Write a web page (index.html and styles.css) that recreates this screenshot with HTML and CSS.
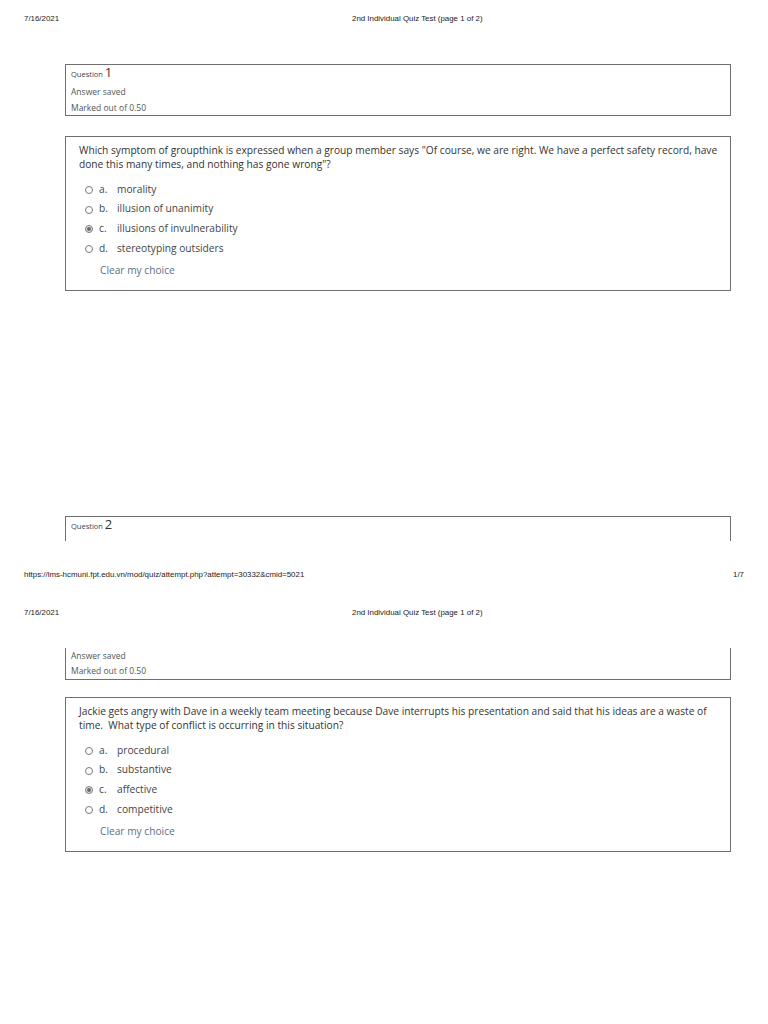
FILE: index.html
```html
<!DOCTYPE html>
<html lang="en">
<head>
    <meta charset="UTF-8">
    <meta name="viewport" content="width=device-width, initial-scale=1.0">
    <title>2nd Individual Quiz Test (page 1 of 2)</title>
    <link rel="stylesheet" href="styles.css">
</head>
<body>

<!-- printed page 1 -->
<div class="page">
    <div class="print-head">
        <span class="print-date">7/16/2021</span>
        <span class="print-title">2nd Individual Quiz Test (page 1 of 2)</span>
    </div>

    <div class="quiz">
        <div class="info">
            <div class="qno">Question <span class="num">1</span></div>
            <div class="state">Answer saved</div>
            <div class="grade">Marked out of 0.50</div>
        </div>

        <div class="formulation">
            <div class="qtext">Which symptom of groupthink is expressed when a group member says "Of course, we are right. We have a perfect safety record, have done this many times, and nothing has gone wrong"?</div>
            <div class="answer">
                <div class="option"><span class="radio"></span><span class="letter">a.</span><span>morality</span></div>
                <div class="option"><span class="radio"></span><span class="letter">b.</span><span>illusion of unanimity</span></div>
                <div class="option"><span class="radio checked"></span><span class="letter">c.</span><span>illusions of invulnerability</span></div>
                <div class="option"><span class="radio"></span><span class="letter">d.</span><span>stereotyping outsiders</span></div>
            </div>
            <div class="clear-choice">Clear my choice</div>
        </div>

        <div class="info info-top">
            <div class="qno">Question <span class="num">2</span></div>
        </div>
    </div>

    <div class="print-foot">
        <span>https://lms-hcmuni.fpt.edu.vn/mod/quiz/attempt.php?attempt=30332&amp;cmid=5021</span>
        <span>1/7</span>
    </div>
</div>

<!-- printed page 2 -->
<div class="page page-last">
    <div class="print-head">
        <span class="print-date">7/16/2021</span>
        <span class="print-title">2nd Individual Quiz Test (page 1 of 2)</span>
    </div>

    <div class="quiz quiz-cont">
        <div class="info info-bottom">
            <div class="state">Answer saved</div>
            <div class="grade">Marked out of 0.50</div>
        </div>

        <div class="formulation">
            <div class="qtext">Jackie gets angry with Dave in a weekly team meeting because Dave interrupts his presentation and said that his ideas are a waste of time.&nbsp; What type of conflict is occurring in this situation?</div>
            <div class="answer">
                <div class="option"><span class="radio"></span><span class="letter">a.</span><span>procedural</span></div>
                <div class="option"><span class="radio"></span><span class="letter">b.</span><span>substantive</span></div>
                <div class="option"><span class="radio checked"></span><span class="letter">c.</span><span>affective</span></div>
                <div class="option"><span class="radio"></span><span class="letter">d.</span><span>competitive</span></div>
            </div>
            <div class="clear-choice">Clear my choice</div>
        </div>
    </div>
</div>

</body>
</html>
```

FILE: styles.css
```css
body {
    margin: 0;
    background: #fff;
    font-family: "Open Sans", Arial, sans-serif;
    color: #333;
}
.page {
    height: 594px;
    display: flex;
    flex-direction: column;
}
.page-last {
    height: 430px;
}

/* browser print header / footer */
.print-head, .print-foot {
    font-family: "Liberation Sans", Arial, sans-serif;
    font-size: 7.9px;
    line-height: 10px;
    color: #222;
}
.print-head {
    display: grid;
    grid-template-columns: 328px auto;
    padding: 14px 24px 0;
}
.print-foot {
    margin-top: auto;
    padding: 0 24px 14px;
    display: flex;
    justify-content: space-between;
}

/* quiz blocks */
.quiz {
    margin: 40px 0 0 65px;
    width: 666px;
}
.quiz-cont {
    margin-top: 30px;
}
.info {
    border: 1px solid #707070;
    padding: 0 6px 0 5px;
    color: #555;
    font-size: 8.5px;
}
.info .qno {
    height: 19px;
    line-height: 19px;
    font-size: 7.5px;
    color: #444;
}
.info .num {
    font-size: 13px;
    line-height: 0;
    color: #333;
}
.info .state {
    line-height: 16px;
}
.info .grade {
    line-height: 15px;
}
.info-top {
    margin-top: 225px;
    height: 24px;
    border-bottom: none;
}
.info-bottom {
    border-top: none;
    padding-bottom: 1px;
}
.info-bottom .state, .info-bottom .grade {
    line-height: 15px;
}
.formulation {
    margin-top: 20px;
    border: 1px solid #707070;
    height: 147px;
    padding: 6px 10px 0 13px;
    font-size: 10.2px;
}
.quiz-cont .formulation {
    margin-top: 17px;
}
.qtext {
    line-height: 14px;
    color: #333;
}
.answer {
    margin-top: 8px;
}
.option {
    display: flex;
    align-items: center;
    height: 19.6px;
    padding-left: 6px;
    color: #444;
}
.radio {
    width: 8px;
    height: 8px;
    box-sizing: border-box;
    border: 1px solid #7a7a7a;
    border-radius: 50%;
    margin: 3px 6px 0 0;
    display: flex;
    align-items: center;
    justify-content: center;
}
.radio.checked {
    background: #e6e6e6;
}
.radio.checked::after {
    content: "";
    width: 4px;
    height: 4px;
    border-radius: 50%;
    background: #6a6a6a;
}
.letter {
    width: 18px;
}
.clear-choice {
    margin: 5px 0 0 21px;
    line-height: 16px;
    color: #5b6f82;
}
```
